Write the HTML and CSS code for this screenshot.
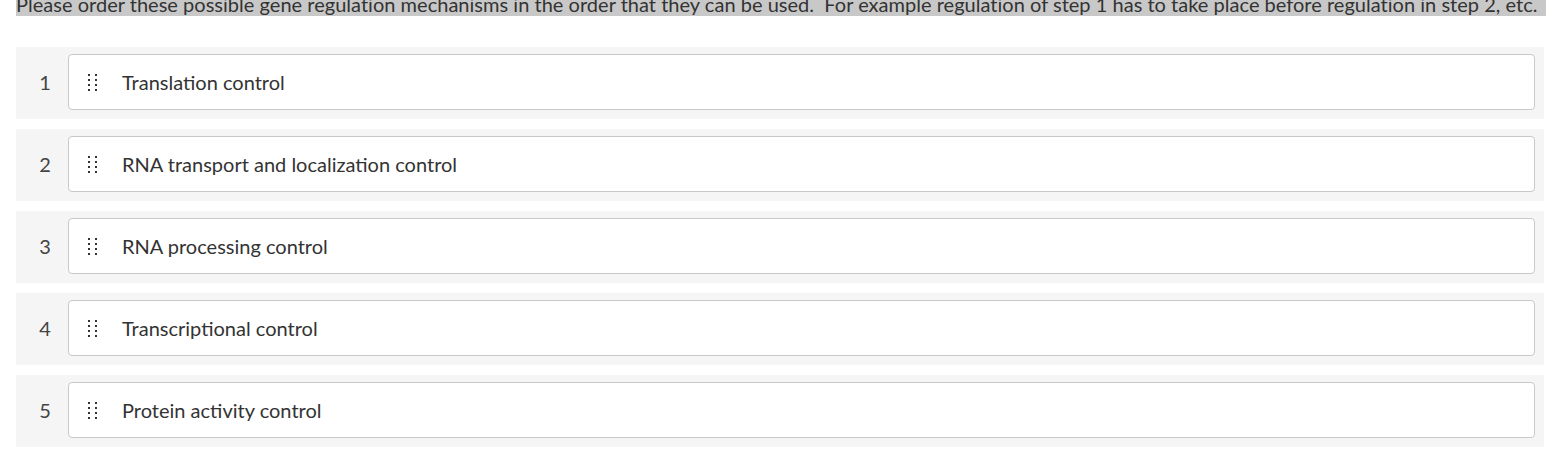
FILE: index.html
```html
<!DOCTYPE html>
<html lang="en">
<head>
<meta charset="utf-8">
<title>Ordering question</title>
<link rel="stylesheet" href="styles.css">
</head>
<body>
<div class="page">
  <p class="question"><span class="hl">Please order these possible gene regulation mechanisms in the order that they can be used.&nbsp; For example regulation of step 1 has to take place before regulation in step 2, etc.</span></p>
  <ol class="list">
    <li class="row"><span class="num">1</span><div class="box"><span class="handle"><i></i><i></i><i></i><i></i><i></i><i></i><i></i><i></i></span><span class="label">Translation control</span></div></li>
    <li class="row"><span class="num">2</span><div class="box"><span class="handle"><i></i><i></i><i></i><i></i><i></i><i></i><i></i><i></i></span><span class="label">RNA transport and localization control</span></div></li>
    <li class="row"><span class="num">3</span><div class="box"><span class="handle"><i></i><i></i><i></i><i></i><i></i><i></i><i></i><i></i></span><span class="label">RNA processing control</span></div></li>
    <li class="row"><span class="num">4</span><div class="box"><span class="handle"><i></i><i></i><i></i><i></i><i></i><i></i><i></i><i></i></span><span class="label">Transcriptional control</span></div></li>
    <li class="row"><span class="num">5</span><div class="box"><span class="handle"><i></i><i></i><i></i><i></i><i></i><i></i><i></i><i></i></span><span class="label">Protein activity control</span></div></li>
  </ol>
</div>
</body>
</html>
```

FILE: styles.css
```css
html, body {
  margin: 0;
  padding: 0;
  background: #ffffff;
}
body {
  font-family: Lato, "Noto Sans", sans-serif;
  color: #333333;
}
.page {
  padding: 0 8px 0 16px;
}
.question {
  margin: -8px 0 0 0;
  font-size: 20px;
  line-height: 24px;
  white-space: nowrap;
  letter-spacing: 0.02px;
}
.hl {
  background: #c8c8c8;
  color: #333333;
  padding-right: 8px;
}
.list {
  list-style: none;
  margin: 31px 0 0 0;
  padding: 0;
  display: flex;
  flex-direction: column;
  gap: 10px;
}
.row {
  display: flex;
  align-items: center;
  background: #f5f5f5;
  height: 72px;
  box-sizing: border-box;
  padding: 7px 9px 9px 0;
}
.num {
  width: 52px;
  box-sizing: border-box;
  padding-left: 6px;
  text-align: center;
  font-size: 20px;
  color: #444444;
  flex: none;
}
.box {
  flex: 1;
  height: 56px;
  box-sizing: border-box;
  background: #ffffff;
  border: 1px solid #c9c9c9;
  border-radius: 4px;
  display: flex;
  align-items: center;
  padding-left: 19px;
}
.handle {
  display: grid;
  grid-template-columns: 2px 2px;
  column-gap: 5px;
  row-gap: 3px;
  width: 9px;
  margin-right: 25px;
}
.handle i {
  display: block;
  width: 2px;
  height: 2px;
  background: #333333;
}
.label {
  font-size: 20px;
  color: #333333;
}
```
